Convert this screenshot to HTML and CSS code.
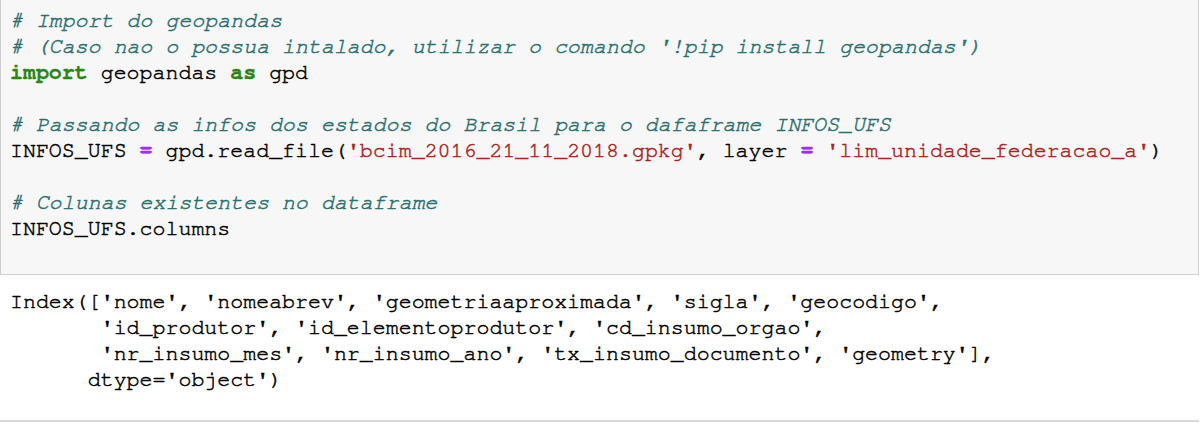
FILE: index.html
```html
<!DOCTYPE html>
<html>
<head>
<meta charset="utf-8">
<link rel="stylesheet" href="styles.css">
</head>
<body>
<div class="cell">
<pre class="code"><span class="c"># Import do geopandas</span>
<span class="c"># (Caso nao o possua intalado, utilizar o comando '!pip install geopandas')</span>
<span class="k">import</span> geopandas <span class="k">as</span> gpd

<span class="c"># Passando as infos dos estados do Brasil para o dafaframe INFOS_UFS</span>
INFOS_UFS <span class="o">=</span> gpd.read_file(<span class="s">'bcim_2016_21_11_2018.gpkg'</span>, layer <span class="o">=</span> <span class="s">'lim_unidade_federacao_a'</span>)

<span class="c"># Colunas existentes no dataframe</span>
INFOS_UFS.columns</pre>
<pre class="output">Index(['nome', 'nomeabrev', 'geometriaaproximada', 'sigla', 'geocodigo',
       'id_produtor', 'id_elementoprodutor', 'cd_insumo_orgao',
       'nr_insumo_mes', 'nr_insumo_ano', 'tx_insumo_documento', 'geometry'],
      dtype='object')</pre>
</div>
</body>
</html>
```
FILE: styles.css
```css
html, body {
  margin: 0;
  padding: 0;
  background: #ffffff;
}
.cell {
  width: 1199px;
  display: flex;
  flex-direction: column;
}
.code, .output {
  margin: 0;
  font-family: "Nimbus Mono PS", "Nimbus Mono L", "FreeMono", "Courier", "Liberation Mono", monospace;
  font-size: 21.6px;
  line-height: 26px;
  color: #000000;
  white-space: pre;
  -webkit-text-stroke: 0.5px currentColor;
}
.code {
  background: #f7f7f7;
  border: 1px solid #cfcfcf;
  border-top: none;
  padding: 8px 9px 32px 9px;
}
.output {
  padding: 14px 10px 27px 10px;
  border-bottom: 2px solid #d9d9d9;
}
.c {
  color: #2a7070;
  font-style: italic;
}
.k {
  color: #2a8712;
  font-weight: bold;
  -webkit-text-stroke: 0.3px currentColor;
}
.o {
  color: #a12ef2;
  font-weight: bold;
}
.s {
  color: #ad1f1c;
}
```
